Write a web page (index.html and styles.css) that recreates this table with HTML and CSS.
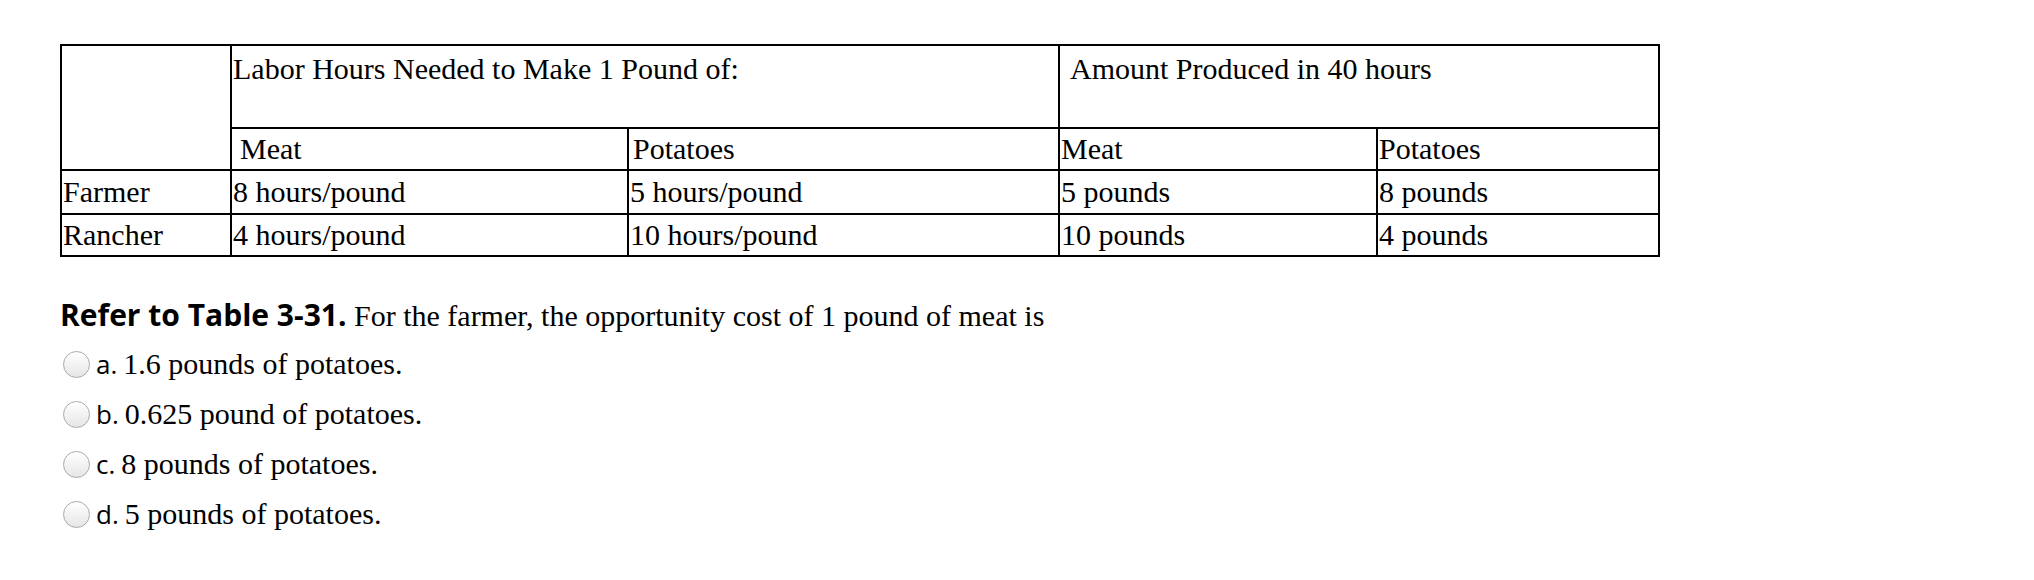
FILE: index.html
```html
<!DOCTYPE html>
<html>
<head>
<meta charset="utf-8">
<link rel="stylesheet" href="styles.css">
</head>
<body>
<div class="page">
  <table class="grid">
    <colgroup>
      <col class="c1"><col class="c2"><col class="c3"><col class="c4"><col class="c5">
    </colgroup>
    <tr class="r-head">
      <td rowspan="2"></td>
      <td colspan="2" class="top pl1">Labor Hours Needed to Make 1 Pound of:</td>
      <td colspan="2" class="top pl10">Amount Produced in 40 hours</td>
    </tr>
    <tr class="r-sub">
      <td class="pl8">Meat</td>
      <td class="pl4">Potatoes</td>
      <td class="pl1">Meat</td>
      <td class="pl1">Potatoes</td>
    </tr>
    <tr class="r-data">
      <td class="pl1">Farmer</td>
      <td class="pl1">8 hours/pound</td>
      <td class="pl1">5 hours/pound</td>
      <td class="pl1">5 pounds</td>
      <td class="pl1">8 pounds</td>
    </tr>
    <tr class="r-data2">
      <td class="pl1">Rancher</td>
      <td class="pl1">4 hours/pound</td>
      <td class="pl1">10 hours/pound</td>
      <td class="pl1">10 pounds</td>
      <td class="pl1">4 pounds</td>
    </tr>
  </table>

  <div class="question">
    <p class="stem"><span class="ref">Refer to Table 3-31.</span> For the farmer, the opportunity cost of 1 pound of meat is</p>
    <ul class="options">
      <li class="opt"><span class="radio"></span><span class="letter">a.</span><span class="ans">1.6 pounds of potatoes.</span></li>
      <li class="opt"><span class="radio"></span><span class="letter">b.</span><span class="ans">0.625 pound of potatoes.</span></li>
      <li class="opt"><span class="radio"></span><span class="letter">c.</span><span class="ans">8 pounds of potatoes.</span></li>
      <li class="opt"><span class="radio"></span><span class="letter">d.</span><span class="ans">5 pounds of potatoes.</span></li>
    </ul>
  </div>
</div>
</body>
</html>
```

FILE: styles.css
```css
html, body {
  margin: 0;
  padding: 0;
  background: #ffffff;
}

.page {
  padding: 44px 0 0 60px;
  font-family: "Liberation Serif", "Times New Roman", serif;
  color: #000;
}

.grid {
  border-collapse: collapse;
  table-layout: fixed;
  width: 1598px;
  font-size: 30px;
  line-height: 32px;
}

.grid td {
  border: 2px solid #000;
  padding: 0;
  vertical-align: middle;
  white-space: nowrap;
  overflow: hidden;
}

.c1 { width: 170px; }
.c2 { width: 397px; }
.c3 { width: 431px; }
.c4 { width: 318px; }
.c5 { width: 282px; }

.r-head { height: 83px; }
.r-sub { height: 42px; }
.r-data { height: 44px; }
.r-data2 { height: 42px; }

.grid td.top {
  vertical-align: top;
  padding-top: 7px;
}

.grid td.pl1 { padding-left: 1px; }
.grid td.pl4 { padding-left: 4px; }
.grid td.pl8 { padding-left: 8px; }
.grid td.pl10 { padding-left: 10px; }

.question {
  padding-top: 38px;
}

.stem {
  margin: 0;
  font-size: 30px;
  line-height: 40px;
}

.ref {
  font-family: "Open Sans", "Liberation Sans", sans-serif;
  font-weight: 700;
  font-size: 30px;
}

.options {
  list-style: none;
  margin: 8px 0 0 0;
  padding: 0;
  display: flex;
  flex-direction: column;
  gap: 10px;
}

.opt {
  display: flex;
  align-items: center;
  height: 40px;
  font-size: 30px;
}

.radio {
  width: 27px;
  height: 27px;
  box-sizing: border-box;
  border-radius: 50%;
  border: 1px solid #a9a9a9;
  background: linear-gradient(#ffffff, #e6e6e6);
  margin-left: 3px;
  margin-right: 6px;
  flex: none;
}

.letter {
  font-family: "Open Sans", "Liberation Sans", sans-serif;
  font-size: 26px;
  margin-right: 6px;
}

.ans {
  font-family: "Liberation Serif", "Times New Roman", serif;
}
```
